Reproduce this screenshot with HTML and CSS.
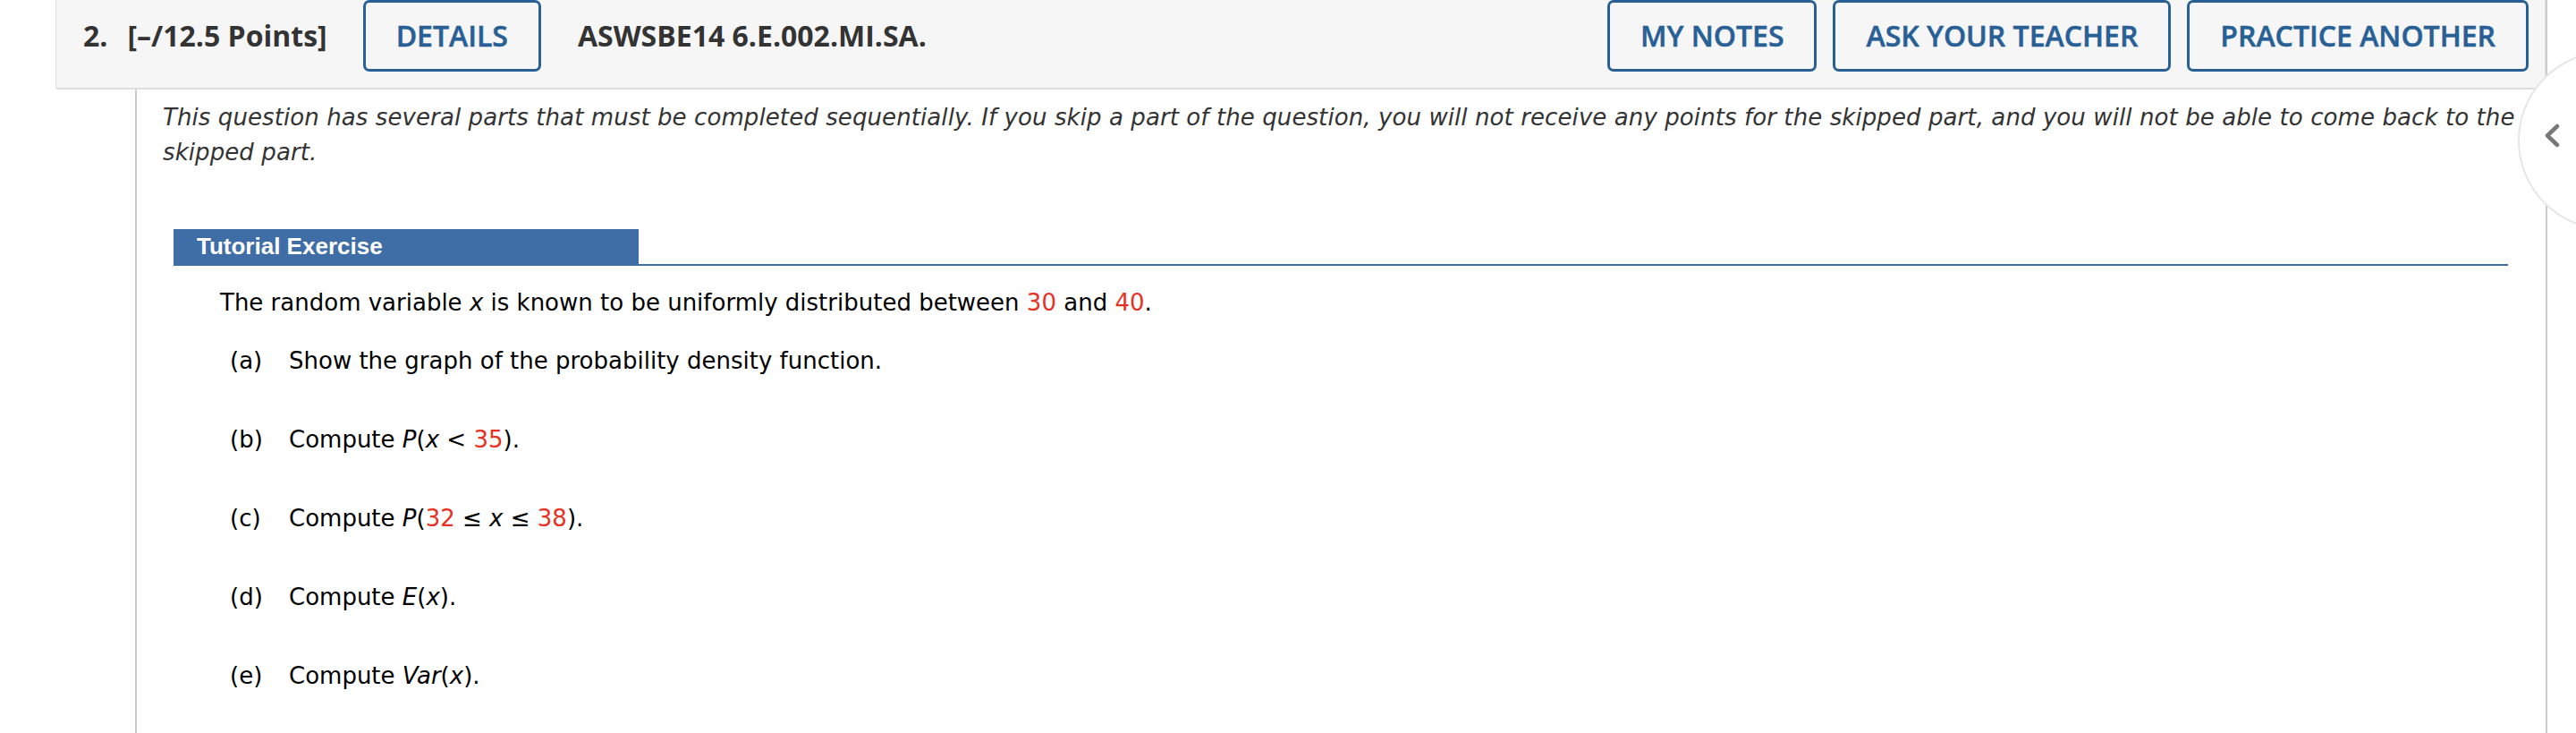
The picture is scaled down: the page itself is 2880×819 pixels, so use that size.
FILE: index.html
```html
<!DOCTYPE html>
<html lang="en">
<head>
<meta charset="utf-8">
<title>Question 2</title>
<link rel="stylesheet" href="styles.css">
</head>
<body>
<div class="page">
  <div class="question">
    <div class="qhead">
      <div class="qhead-left">
        <span class="qnum">2.</span>
        <span class="qpts">[&ndash;/12.5 Points]</span>
        <button class="btn">DETAILS</button>
        <span class="qcode">ASWSBE14 6.E.002.MI.SA.</span>
      </div>
      <div class="qhead-right">
        <button class="btn">MY NOTES</button>
        <button class="btn">ASK YOUR TEACHER</button>
        <button class="btn">PRACTICE ANOTHER</button>
      </div>
    </div>
    <div class="qbody">
      <p class="note">This question has several parts that must be completed sequentially. If you skip a part of the question, you will not receive any points for the skipped part, and you will not be able to come back to the skipped part.</p>
      <div class="tutorial">
        <div class="tut-head"><span class="tut-title">Tutorial Exercise</span></div>
        <p class="stem">The random variable <i>x</i> is known to be uniformly distributed between <span class="num">30</span> and <span class="num">40</span>.</p>
        <div class="parts">
          <div class="part"><span class="plabel">(a)</span><span class="ptext">Show the graph of the probability density function.</span></div>
          <div class="part"><span class="plabel">(b)</span><span class="ptext">Compute <i>P</i>(<i>x</i> &lt; <span class="num">35</span>).</span></div>
          <div class="part"><span class="plabel">(c)</span><span class="ptext">Compute <i>P</i>(<span class="num">32</span> &le; <i>x</i> &le; <span class="num">38</span>).</span></div>
          <div class="part"><span class="plabel">(d)</span><span class="ptext">Compute <i>E</i>(<i>x</i>).</span></div>
          <div class="part"><span class="plabel">(e)</span><span class="ptext">Compute <i>Var</i>(<i>x</i>).</span></div>
        </div>
      </div>
    </div>
  </div>
  <div class="side-toggle">
    <svg class="chev" width="20" height="28" viewBox="0 0 20 28"><polyline points="15,3 4,13.5 15,24" fill="none" stroke="#777" stroke-width="4.5" stroke-linecap="round" stroke-linejoin="round"/></svg>
  </div>
</div>
</body>
</html>
```

FILE: styles.css
```css
html, body {
  margin: 0;
  padding: 0;
  background: #ffffff;
  overflow: hidden;
}
.page {
  position: relative;
  width: 2880px;
  height: 819px;
  overflow: hidden;
}
.question {
  margin-left: 62px;
  width: 2784px;
  height: 819px;
  border-right: 2px solid #cccccc;
}
.qhead {
  display: flex;
  justify-content: space-between;
  align-items: center;
  background: #f6f6f6;
  border: 1px solid #dfdfdf;
  border-top: none;
  border-bottom: 2px solid #dddddd;
  border-radius: 0 0 3px 3px;
  padding: 0 18px 18px 30px;
  font-family: "Open Sans", "Liberation Sans", sans-serif;
  color: #333333;
}
.qhead-left, .qhead-right {
  display: flex;
  align-items: center;
}
.qhead-right { gap: 18px; }
.qnum, .qpts, .qcode {
  font-size: 32px;
  font-weight: 700;
  line-height: 1;
}
.qpts { margin-left: 22px; }
.qpts + .btn { margin-left: 40px; }
.qcode { margin-left: 41px; }
.btn {
  height: 80px;
  box-sizing: border-box;
  border: 3px solid #286096;
  border-radius: 7px;
  background: #f6f6f6;
  color: #286096;
  font-family: "Open Sans", "Liberation Sans", sans-serif;
  font-size: 32px;
  font-weight: 600;
  -webkit-text-stroke: 0.5px #286096;
  padding: 0 34px;
  margin: 0;
  line-height: 1;
}
.qbody {
  margin-left: 89px;
  border-left: 2px solid #cccccc;
  padding: 12px 24px 0 29px;
  height: 707px;
  font-family: "DejaVu Sans", Verdana, sans-serif;
  font-size: 26px;
  line-height: 39px;
}
.note {
  margin: 0;
  font-style: italic;
  color: #333333;
  letter-spacing: 0.09px;
}
.tutorial {
  margin: 66px 18px 0 12px;
}
.tut-head {
  border-bottom: 2px solid #3f6ea6;
}
.tut-title {
  display: inline-block;
  box-sizing: border-box;
  width: 520px;
  height: 39px;
  line-height: 39px;
  padding-left: 26px;
  background: #3f6ea6;
  color: #ffffff;
  font-family: "Liberation Sans", Arial, sans-serif;
  font-weight: 700;
  font-size: 26px;
  vertical-align: bottom;
}
.stem {
  margin: 22px 0 0 52px;
  color: #000000;
}
.num { color: #e63224; }
.parts {
  margin: 26px 0 0 63px;
  display: flex;
  flex-direction: column;
  gap: 49px;
  color: #000000;
}
.part {
  display: grid;
  grid-template-columns: 66px 1fr;
}
.side-toggle {
  position: absolute;
  left: 2815px;
  top: 57px;
  width: 200px;
  height: 200px;
  box-sizing: border-box;
  border-radius: 50%;
  border: 2px solid #e6e6e6;
  background: #ffffff;
}
.chev {
  position: absolute;
  left: 27px;
  top: 79px;
}
```
